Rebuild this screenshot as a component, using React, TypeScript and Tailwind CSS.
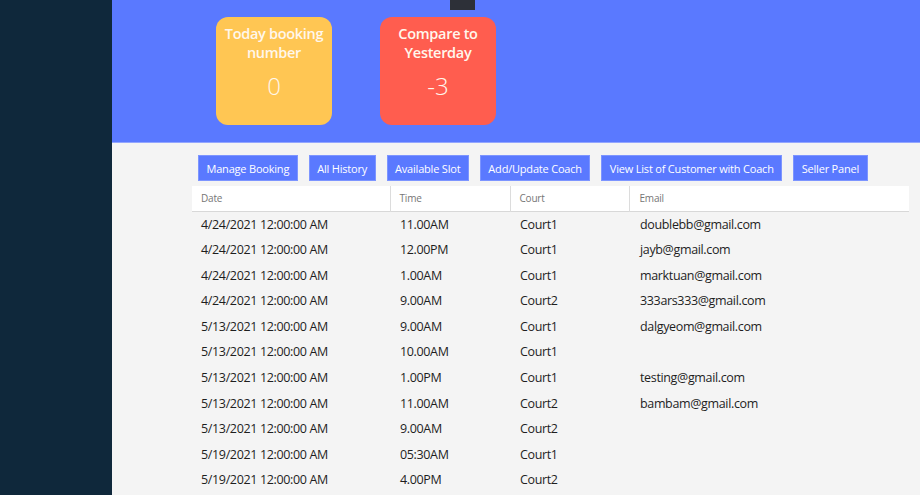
import React from "react";

type TRow = {
  date: string;
  time: string;
  court: string;
  email: string;
};

const rows: TRow[] = [
  { date: "4/24/2021 12:00:00 AM", time: "11.00AM", court: "Court1", email: "doublebb@gmail.com" },
  { date: "4/24/2021 12:00:00 AM", time: "12.00PM", court: "Court1", email: "jayb@gmail.com" },
  { date: "4/24/2021 12:00:00 AM", time: "1.00AM", court: "Court1", email: "marktuan@gmail.com" },
  { date: "4/24/2021 12:00:00 AM", time: "9.00AM", court: "Court2", email: "333ars333@gmail.com" },
  { date: "5/13/2021 12:00:00 AM", time: "9.00AM", court: "Court1", email: "dalgyeom@gmail.com" },
  { date: "5/13/2021 12:00:00 AM", time: "10.00AM", court: "Court1", email: "" },
  { date: "5/13/2021 12:00:00 AM", time: "1.00PM", court: "Court1", email: "testing@gmail.com" },
  { date: "5/13/2021 12:00:00 AM", time: "11.00AM", court: "Court2", email: "bambam@gmail.com" },
  { date: "5/13/2021 12:00:00 AM", time: "9.00AM", court: "Court2", email: "" },
  { date: "5/19/2021 12:00:00 AM", time: "05:30AM", court: "Court1", email: "" },
  { date: "5/19/2021 12:00:00 AM", time: "4.00PM", court: "Court2", email: "" },
];

const buttons = [
  "Manage Booking",
  "All History",
  "Available Slot",
  "Add/Update Coach",
  "View List of Customer with Coach",
  "Seller Panel",
];

const StatCard = ({ title, value, color }: { title: string; value: string; color: string }) => {
  return (
    <div
      className={`flex flex-col items-center w-[116px] h-[108px] rounded-[12px] pt-[7px] text-[#fff7ec] ${color}`}
    >
      <p className="text-[14.5px] font-semibold leading-[19px] tracking-[-0.3px] text-center">{title}</p>
      <p className="text-[24px] font-light leading-[30px] mt-[9px]">{value}</p>
    </div>
  );
};

const App = () => {
  return (
    <div
      className="flex w-full h-[495px] overflow-hidden bg-[#f4f4f4]"
      style={{ fontFamily: '"Open Sans", "Noto Sans", sans-serif' }}
    >
      {/* sidebar */}
      <div className="w-[112px] shrink-0 bg-[#0f283b]" />

      <div className="flex-1 flex flex-col">
        {/* header */}
        <div className="relative h-[143px] shrink-0 bg-[#5a79ff] border-b border-[#93a6ff] pl-[104px] pt-[17px] flex gap-[48px]">
          <div className="absolute left-[338px] top-0 w-[25px] h-[10px] bg-[#2d3038]" />
          <StatCard title="Today booking number" value="0" color="bg-[#ffc653]" />
          <StatCard title="Compare to Yesterday" value="-3" color="bg-[#ff5d4f]" />
        </div>

        {/* content */}
        <div className="pl-[80px] pr-[11px] pt-[12px]">
          <div className="flex gap-[11px] pl-[6px]">
            {buttons.map((b) => (
              <button
                key={b}
                className="h-[26px] px-[7.5px] shrink-0 whitespace-nowrap bg-[#5a79ff] border border-[#7d95ff] text-white text-[11px] tracking-[-0.2px] leading-none"
              >
                {b}
              </button>
            ))}
          </div>

          <table className="w-full mt-[5px] border-collapse text-left">
            <thead>
              <tr className="bg-white h-[25px] border-b border-[#d8d8d8] text-[10px] tracking-[-0.2px] text-[#767676]">
                <th className="font-normal pl-[9px] w-[198px]">Date</th>
                <th className="font-normal pl-[9px] w-[120px] border-l border-[#dcdcdc]">Time</th>
                <th className="font-normal pl-[9px] w-[119px] border-l border-[#dcdcdc]">Court</th>
                <th className="font-normal pl-[10px] border-l border-[#dcdcdc]">Email</th>
              </tr>
            </thead>
            <tbody className="text-[12.5px] tracking-[-0.35px] text-[#1e1e1e]">
              {rows.map((r, i) => (
                <tr key={i} className="h-[25.6px]">
                  <td className="pl-[9px] pt-[2px]">{r.date}</td>
                  <td className="pl-[10px] pt-[2px]">{r.time}</td>
                  <td className="pl-[10px] pt-[2px]">{r.court}</td>
                  <td className="pl-[11px] pt-[2px]">{r.email}</td>
                </tr>
              ))}
            </tbody>
          </table>
        </div>
      </div>
    </div>
  );
};

export default App;
